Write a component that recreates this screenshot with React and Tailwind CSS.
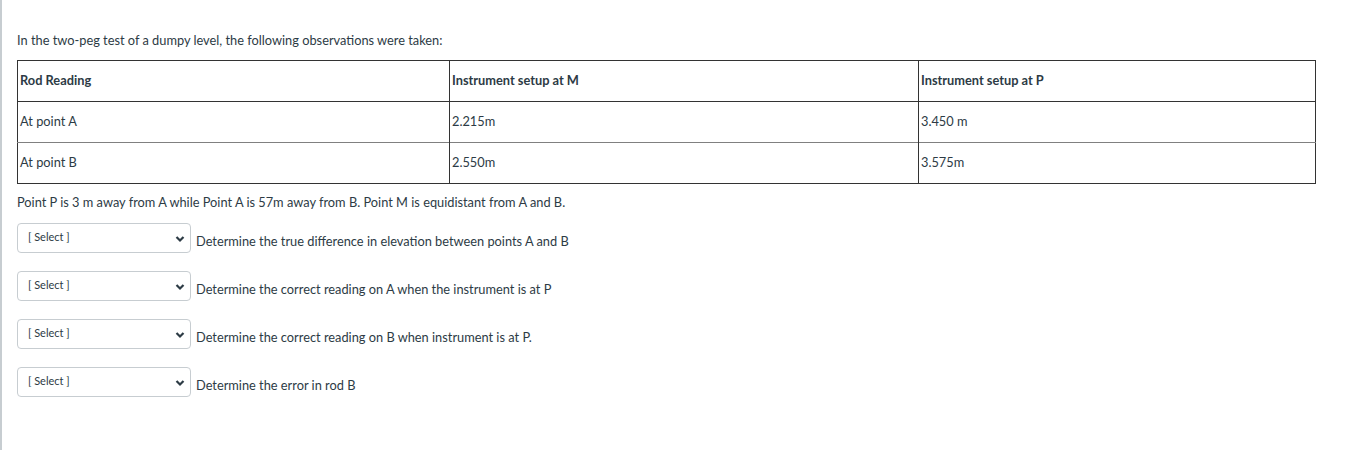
import React from 'react';

const rows = [
  ['At point A', '2.215m', '3.450 m'],
  ['At point B', '2.550m', '3.575m'],
];

const questions = [
  'Determine the true difference in elevation between points A and B',
  'Determine the correct reading on A when the instrument is at P',
  'Determine the correct reading on B when instrument is at P.',
  'Determine the error in rod B',
];

const Chevron = () => (
  <svg width="10" height="8" viewBox="0 0 10 8" className="shrink-0">
    <path d="M1.5 2 L5 5.5 L8.5 2" fill="none" stroke="#2d3b45" strokeWidth="2.2" />
  </svg>
);

const SelectBox = () => (
  <div className="w-[174px] h-[30px] border border-[#c7cdd1] rounded-[4px] bg-white flex items-start justify-between pl-[10px] pr-[5px] pt-[6px] shrink-0">
    <span className="text-[11px] leading-[14px] text-[#2d3b45]">[ Select ]</span>
    <span className="pt-[5px]"><Chevron /></span>
  </div>
);

export default function App() {
  return (
    <div className="min-h-[450px] bg-white border-l-2 border-[#c7cdd1] font-['Lato','Noto_Sans',sans-serif] text-[#2d3b45] text-[12.8px]">
      <div className="pl-[15px] pr-[45px] pt-[31px]">
        <p className="leading-[18px] mb-[11px]">In the two-peg test of a dumpy level, the following observations were taken:</p>
        <table className="w-[1299px] border-collapse border border-[#333]">
          <thead>
            <tr className="h-[41px]">
              <th className="w-[432px] text-left font-bold border border-[#333] px-[2px]">Rod Reading</th>
              <th className="w-[469px] text-left font-bold border border-[#333] px-[2px]">Instrument setup at M</th>
              <th className="text-left font-bold border border-[#333] px-[2px]">Instrument setup at P</th>
            </tr>
          </thead>
          <tbody>
            {rows.map((r) => (
              <tr key={r[0]} className="h-[41px]">
                {r.map((c, i) => (
                  <td key={i} className={`px-[2px] border-t border-t-[#808080] ${i > 0 ? 'border-l border-l-[#333]' : ''}`}>{c}</td>
                ))}
              </tr>
            ))}
          </tbody>
        </table>
        <p className="leading-[18px] mt-[9px] mb-[12px]">Point P is 3 m away from A while Point A is 57m away from B. Point M is equidistant from A and B.</p>
        <div className="flex flex-col gap-[18px]">
          {questions.map((q) => (
            <div key={q} className="flex items-start gap-[5px]">
              <SelectBox />
              <span className="pt-[9px] leading-[18px]">{q}</span>
            </div>
          ))}
        </div>
      </div>
    </div>
  );
}
